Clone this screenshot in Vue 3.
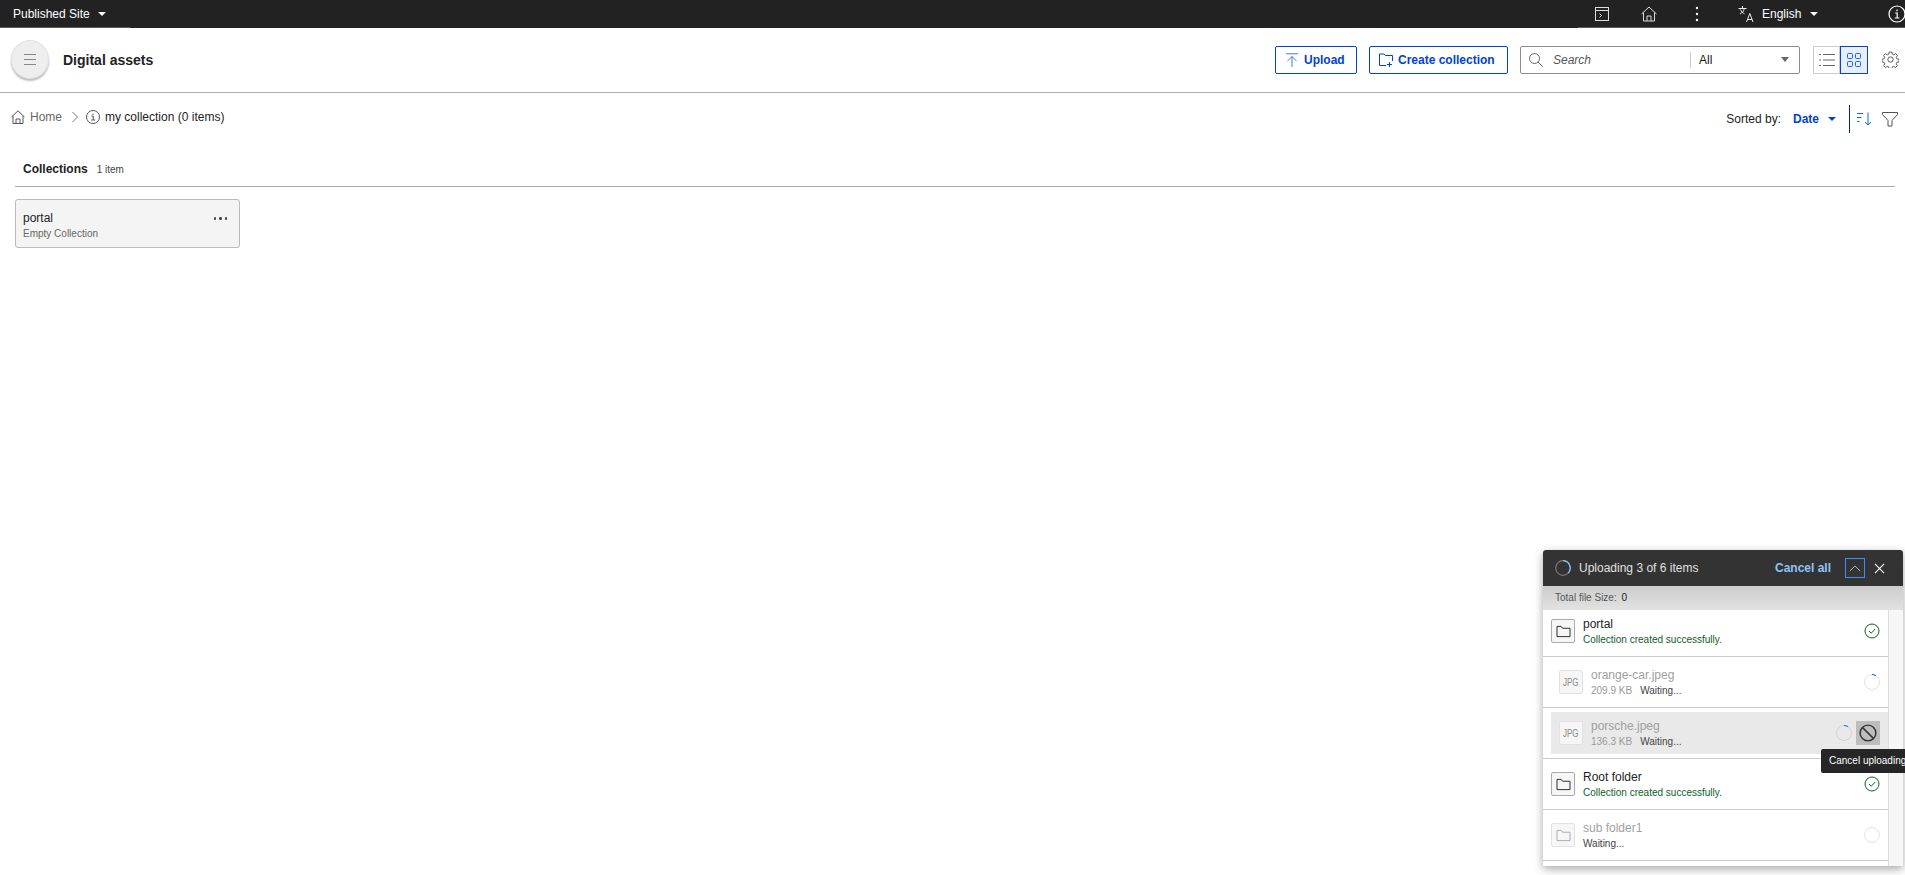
<script setup>
const rows = [
  { kind: 'folder', name: 'portal', msg: 'Collection created successfully.', state: 'done' },
  { kind: 'file', name: 'orange-car.jpeg', size: '209.9 KB', msg: 'Waiting...', state: 'spin' },
  { kind: 'file', name: 'porsche.jpeg', size: '136.3 KB', msg: 'Waiting...', state: 'spin', hover: true },
  { kind: 'folder', name: 'Root folder', msg: 'Collection created successfully.', state: 'done' },
  { kind: 'folder', name: 'sub folder1', msg: 'Waiting...', state: 'idle', muted: true }
]
</script>

<template>
  <div class="page">
    <div class="topbar">
      <div class="site">Published Site <span class="caret white"></span></div>
      <div class="top-right">
        <svg class="t1" viewBox="0 0 14 14" width="14" height="14" fill="none" stroke="#ddd"><rect x=".5" y=".5" width="13" height="13"/><path d="M.5 3.500h13M4.500 6.500l2 2-2 2"/></svg>
        <svg class="home" viewBox="0 0 18 18" width="18" height="18" fill="none" stroke="#ddd"><path d="M1.500 9 9 2l7.500 7M3.500 7.500V16h11V7.500M7 16v-5h4v5"/></svg>
        <svg class="dots" viewBox="0 0 4 16" width="4" height="16" fill="#fff"><circle cx="2" cy="2" r="1.200"/><circle cx="2" cy="8" r="1.200"/><circle cx="2" cy="14" r="1.200"/></svg>
        <span class="lang"><svg viewBox="0 0 18 18" width="18" height="18" fill="none" stroke="#eee"><path d="M1.500 3.500h8M5.500 1v2.500M3 9c2.300-1 3.800-3 4.300-5.500M3.500 4.500c.8 2 2 3.300 4 4.300M9.500 17l3.300-8.500 3.200 8.500M10.600 14.500h4.400"/></svg><span class="lang-t">English</span><span class="caret white"></span></span>
        <svg class="info" viewBox="0 0 18 18" width="18" height="18" fill="none" stroke="#fff" stroke-width="1.200"><circle cx="9" cy="9" r="8"/><path d="M7.200 8h2v5M6.800 13h4.600M9 4.500v1.800"/></svg>
      </div>
    </div>

    <header class="head">
      <button class="menu"><span></span><span></span><span></span></button>
      <h1>Digital assets</h1>
      <div class="actions">
        <button class="btn upload">
          <svg viewBox="0 0 14 14" width="14" height="14" fill="none" stroke="#4a78e0"><path d="M1 .8h12M7 14V3.500M2.500 8 7 3.500 11.500 8"/></svg>Upload
        </button>
        <button class="btn create">
          <svg viewBox="0 0 14 14" width="14" height="14" fill="none" stroke="#0043ce"><path d="M7 12.500H.5V1h4.500l1.500 1.500h7V8M10.500 9v5M8 11.500h5"/></svg>Create collection
        </button>
        <div class="search">
          <svg viewBox="0 0 14 14" width="14" height="14" fill="none" stroke="#666"><circle cx="5.500" cy="5.500" r="5"/><path d="m9 9 4.800 4.800"/></svg>
          <span class="ph">Search</span>
          <span class="sep"></span>
          <span class="all">All</span>
          <span class="caret grey"></span>
        </div>
        <div class="switch">
          <span class="sw">
            <svg viewBox="0 0 16 16" width="16" height="16" fill="none" stroke="#666"><path d="M4 2.500h12M4 8h12M4 13.500h12M0 2.500h2M0 8h2M0 13.500h2"/></svg>
          </span>
          <span class="sw on">
            <svg viewBox="0 0 14 14" width="14" height="14" fill="none" stroke="#0f62fe"><rect x=".5" y=".5" width="5" height="5" rx="1"/><rect x="8.500" y=".5" width="5" height="5" rx="1"/><rect x=".5" y="8.500" width="5" height="5" rx="1"/><rect x="8.500" y="8.500" width="5" height="5" rx="1"/></svg>
          </span>
        </div>
        <svg class="gear" viewBox="0 0 32 32" width="17" height="17" fill="none" stroke="#555" stroke-width="1.800"><path d="M13.500 2h5l.8 4 2.800 1.200 3.500-2.300 3.500 3.500-2.300 3.500 1.200 2.800 4 .8v5l-4 .8-1.200 2.800 2.300 3.500-3.500 3.500-3.500-2.300-2.800 1.200-.8 4h-5l-.8-4-2.800-1.200-3.500 2.300-3.500-3.500 2.300-3.500-1.200-2.800-4-.8v-5l4-.8 1.200-2.800-2.300-3.500 3.500-3.500 3.500 2.300 2.800-1.200z"/><circle cx="16" cy="16" r="5"/></svg>
      </div>
    </header>

    <div class="crumbs">
      <svg viewBox="0 0 14 14" width="14" height="14" fill="none" stroke="#555"><path d="M.5 7 7 .8 13.500 7M2 6v7.500h10V6M5 13.500v-4.500h4v4.500"/></svg>
      <span class="home-link">Home</span>
      <svg class="chev" viewBox="0 0 8 12" width="8" height="12" fill="none" stroke="#777"><path d="m1.500 1 5 5-5 5"/></svg>
      <svg viewBox="0 0 14 14" width="14" height="14" fill="none" stroke="#555"><circle cx="7" cy="7" r="6.500"/><path d="M5.500 6h1.700v4M5.200 10h4M7 3.500V5"/></svg>
      <span class="cur">my collection (0 items)</span>
      <div class="sort">
        <span class="sort-label">Sorted by:</span>
        <span class="sort-val">Date</span>
        <span class="caret blue"></span>
        <span class="sort-bar"></span>
        <svg viewBox="0 0 16 16" width="16" height="16" fill="none" stroke="#0f62fe"><path d="M1 2.500h6M1 6.500h4.500M1 10.500h2.500M12 1.500v12.500M9 11l3 3 3-3"/></svg>
        <svg class="funnel" viewBox="0 0 16 16" width="16" height="16" fill="none" stroke="#555"><path d="M.5 1.500h15v2L10 9.500v5.500H6V9.500L.5 3.500z"/></svg>
      </div>
    </div>

    <section class="coll">
      <div class="coll-head"><b>Collections</b><span>1 item</span></div>
      <div class="card">
        <div>
          <div class="card-name">portal</div>
          <div class="card-sub">Empty Collection</div>
        </div>
        <span class="more"><i></i><i></i><i></i></span>
      </div>
    </section>

    <aside class="panel">
      <div class="p-head">
        <svg class="p-spin" viewBox="0 0 16 16" width="16" height="16" fill="none"><circle cx="8" cy="8" r="7.300" stroke="#777" stroke-width="1.200"/><path d="M8 .7A7.300 7.300 0 0 1 13.200 13" stroke="#8ec5f5" stroke-width="1.200"/></svg>
        <span class="p-title">Uploading 3 of 6 items</span>
        <span class="p-cancel">Cancel all</span>
        <span class="p-up"><svg viewBox="0 0 14 8" width="12" height="7" fill="none" stroke="#ccc"><path d="m1 7 6-6 6 6"/></svg></span>
        <svg class="p-x" viewBox="0 0 12 12" width="11" height="11" fill="none" stroke="#fff" stroke-width="1.200"><path d="m1 1 10 10M11 1 1 11"/></svg>
      </div>
      <div class="p-sub">Total file Size: <span>0</span></div>
      <div class="p-body">
        <div class="p-list">
          <div v-for="r in rows" :key="r.name" class="row" :class="[r.kind, { hover: r.hover, muted: r.muted }]">
            <div class="row-in">
              <span class="thumb">
                <svg v-if="r.kind === 'folder'" viewBox="0 0 16 14" width="15" height="13" fill="none" :stroke="r.muted ? '#aaa' : '#222'"><path d="M1 12.500V1.500h4.500l1.500 2h8v9z"/></svg>
                <span v-else class="jpg">JPG</span>
              </span>
              <div class="txt">
                <div class="nm">{{ r.name }}</div>
                <div class="ms" :class="{ ok: r.state === 'done' }"><span v-if="r.size" class="sz">{{ r.size }}</span>{{ r.msg }}</div>
              </div>
              <svg v-if="r.state === 'done'" class="st" viewBox="0 0 16 16" width="16" height="16" fill="none" stroke="#0e6027"><circle cx="8" cy="8" r="7"/><path d="m5 8 2.200 2.200L11.200 6"/></svg>
              <svg v-else class="ring" viewBox="0 0 16 16" width="16" height="16" fill="none"><circle cx="8" cy="8" r="7.500" :stroke="r.hover ? '#d2d2d2' : '#e2e2e2'"/><path v-if="r.state === 'spin'" d="M8 .5A7.500 7.500 0 0 1 12 1.700" stroke="#0f62fe"/></svg>
              <span v-if="r.hover" class="stop"><svg viewBox="0 0 16 16" width="18" height="18" fill="none" stroke="#333" stroke-width="1.300"><circle cx="8" cy="8" r="7"/><path d="m3 3 10 10"/></svg></span>
              <span v-if="r.hover" class="tip">Cancel uploading</span>
            </div>
          </div>
        </div>
        <div class="track"></div>
      </div>
    </aside>
  </div>
</template>

<style>
html, body { margin: 0; overflow: hidden; background: #fff; }
</style>

<style scoped>
.page { width: 1905px; height: 875px; position: relative; overflow: hidden; font-family: "Liberation Sans", Arial, sans-serif; color: #161616; font-size: 12px; background: #fff; }
.topbar { height: 28px; background: linear-gradient(90deg, #5a5a5a 130px, #222 130px, #222 1578px, #5a5a5a 1578px) no-repeat left bottom / 100% 1px, #222; color: #fff; display: flex; align-items: center; justify-content: space-between; padding-left: 13px; box-sizing: border-box; }
.site { font-size: 12px; display: flex; align-items: center; gap: 8px; }
.caret { display: inline-block; width: 0; height: 0; border-left: 4px solid transparent; border-right: 4px solid transparent; border-top: 4px solid; flex: none; }
.caret.white { border-top-color: #fff; }
.caret.grey { border-top-color: #666; border-top-width: 5px; }
.caret.blue { border-top-color: #0043ce; margin-left: 9px; }
.top-right { display: flex; align-items: center; height: 27px; width: 320px; flex: none; }
.top-right svg { flex: none; }
.t1 { margin-left: 10px; }
.home { margin-left: 31px; }
.dots { margin-left: 37px; }
.lang { display: flex; align-items: center; margin-left: 38px; }
.lang-t { margin: 0 9px 0 7px; }
.info { margin-left: 70px; }
.head { height: 65px; border-bottom: 1px solid #aaa; display: flex; align-items: center; box-sizing: border-box; padding: 0 6px 2px 11px; }
.menu { width: 38px; height: 39px; border-radius: 50%; border: 1px solid #e2e2e2; background: #eee; box-shadow: 0 2px 2px #bbb; display: flex; flex-direction: column; gap: 4px; align-items: center; justify-content: center; padding: 0; }
.menu span { width: 12px; height: 1px; background: #888; }
h1 { margin: 1px 0 0 14px; font-size: 14px; font-weight: 700; color: #222; }
.actions { margin: 1px 0 0 auto; display: flex; align-items: center; }
.btn { height: 28px; border: 1px solid #0043ce; border-radius: 2px; background: #fff; color: #0043ce; font: 700 12px "Liberation Sans", Arial, sans-serif; display: flex; align-items: center; gap: 5px; padding: 0 0 0 9px; box-sizing: border-box; }
.upload { width: 82px; }
.create { width: 139px; margin-left: 12px; }
.search { width: 280px; height: 28px; margin-left: 12px; border: 1px solid #8d8d8d; border-radius: 2px; display: flex; align-items: center; box-sizing: border-box; padding: 0 10px 0 8px; }
.ph { font-style: italic; color: #555; margin-left: 10px; width: 137px; }
.sep { width: 1px; height: 16px; background: #ccc; }
.all { margin-left: 8px; flex: 1; }
.switch { display: flex; margin-left: 13px; height: 28px; }
.sw { width: 27px; height: 28px; box-sizing: border-box; border: 1px solid #ccc; display: flex; align-items: center; justify-content: center; }
.sw.on { width: 28px; border-color: #0043ce; background: #e8eefb; }
.gear { margin-left: 14px; }
.crumbs { display: flex; align-items: center; height: 48px; padding: 0 0 0 11px; color: #666; font-size: 12px; }
.home-link { margin-left: 5px; }
.chev { margin: 0 7px 0 9px; }
.cur { margin-left: 5px; color: #222; }
.sort { margin-left: auto; margin-top: 4px; display: flex; align-items: center; height: 28px; padding-right: 7px; }
.sort-label { color: #222; }
.sort-val { color: #0043ce; font-weight: 700; margin-left: 12px; }
.sort-bar { width: 1px; height: 28px; background: #00209a; margin: 0 6px 0 13px; }
.funnel { margin-left: 10px; }
.coll { padding: 21px 10px 0 15px; }
.coll-head { display: flex; align-items: baseline; gap: 9px; padding: 0 0 10px 8px; border-bottom: 1px solid #aaa; color: #222; }
.coll-head span { font-size: 10px; color: #444; }
.card { width: 225px; height: 49px; margin-top: 12px; background: #f4f4f4; border: 1px solid #bbb; border-radius: 3px; box-sizing: border-box; display: flex; justify-content: space-between; padding: 10px 12px 0 7px; }
.card-name { color: #222; line-height: 16px; }
.card-sub { font-size: 10px; color: #666; line-height: 14px; margin-top: 1px; }
.more { display: flex; gap: 3px; margin: 7px 0 0; }
.more i { width: 2.500px; height: 2.500px; border-radius: 50%; background: #444; }
.panel { position: absolute; left: 1543px; top: 550px; width: 360px; height: 316px; box-shadow: 0 3px 10px rgba(0,0,0,.35); border-radius: 3px 3px 0 0; background: #fff; display: flex; flex-direction: column; }
.p-head { height: 36px; background: #333; border-radius: 3px 3px 0 0; display: flex; align-items: center; padding: 0 18px 0 12px; color: #e0e0e0; flex: none; }
.p-spin { flex: none; }
.p-title { margin-left: 8px; }
.p-cancel { margin-left: auto; color: #8ec5f5; font-weight: 700; }
.p-up { width: 20px; height: 20px; box-sizing: border-box; border: 1px solid #4589ff; margin-left: 14px; display: flex; align-items: center; justify-content: center; }
.p-x { margin-left: 9px; }
.p-sub { height: 24px; background: linear-gradient(#ccc, #e2e2e2); flex: none; padding-left: 12px; line-height: 24px; font-size: 10px; color: #555; }
.p-sub span { color: #222; margin-left: 2px; }
.p-body { flex: 1; display: flex; min-height: 0; }
.p-list { width: 346px; border-right: 1px solid #ddd; box-sizing: border-box; }
.track { width: 14px; background: #f7f7f7; }
.row { border-bottom: 1px solid #ccc; height: 51px; box-sizing: border-box; padding: 4px 0 4px 8px; }
.row:first-child { height: 47px; padding-top: 0; }
.row-in { position: relative; display: flex; align-items: center; height: 100%; padding-right: 8px; }
.row.file .row-in { padding-left: 8px; }
.row.hover .row-in { background: #e9e9e9; }
.thumb { width: 24px; height: 24px; box-sizing: border-box; flex: none; border: 1px solid #aaa; border-radius: 2px; background: #f6f6f6; display: flex; align-items: center; justify-content: center; color: #888; }
.row.file .thumb, .row.muted .thumb { border-color: #e2e2e2; }
.jpg { font-size: 10px; display: inline-block; transform: scaleX(.8); }
.txt { margin-left: 8px; flex: 1; line-height: 15px; padding-top: 2px; }
.nm { color: #222; }
.row.file .nm, .row.muted .nm { color: #a0a0a0; }
.ms { font-size: 10px; color: #444; }
.ms.ok { color: #0e6027; }
.sz { color: #999; margin-right: 8px; }
.st, .ring { flex: none; }
.row.hover .ring { margin-right: 4px; }
.stop { width: 24px; height: 24px; background: #bdbdbd; display: flex; align-items: center; justify-content: center; flex: none; }
.tip { position: absolute; left: 270px; top: 37px; white-space: nowrap; width: 86px; height: 24px; line-height: 24px; background: #262626; color: #fff; padding-left: 8px; font-size: 10px; border-radius: 2px; z-index: 3; }
</style>
